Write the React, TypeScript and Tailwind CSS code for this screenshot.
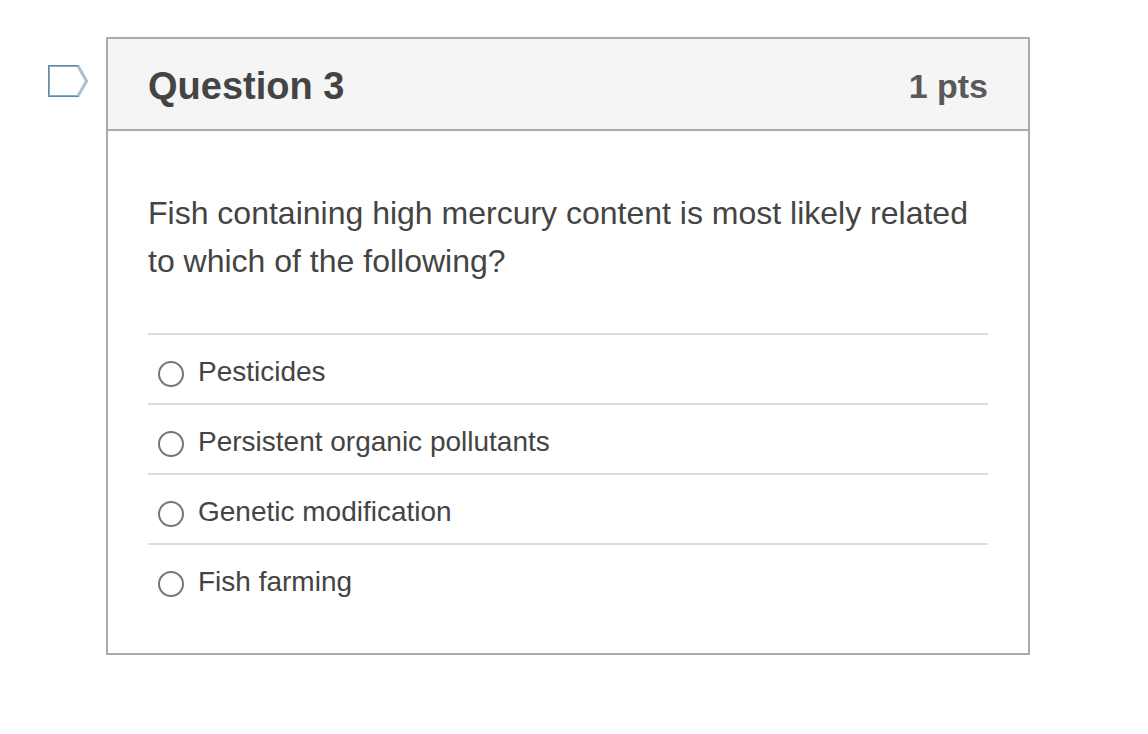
import { useState } from "react";

const answers = [
  "Pesticides",
  "Persistent organic pollutants",
  "Genetic modification",
  "Fish farming",
];

function FlagButton() {
  const [flagged, setFlagged] = useState(false);
  return (
    <button
      type="button"
      aria-label="Flag this question"
      aria-pressed={flagged}
      onClick={() => setFlagged(!flagged)}
      className="mt-7 mr-[18px] shrink-0"
    >
      <svg width="40" height="32" viewBox="0 0 40 32" className="block">
        <path
          d="M1 1H30L38.5 16L30 31H1Z"
          fill={flagged ? "#fcd34d" : "#ffffff"}
          stroke="#8dabc1"
          strokeWidth="2"
        />
        <path
          d="M30 1L38.5 16L30 31"
          fill="none"
          stroke="#a9c1d3"
          strokeWidth="3"
        />
        <path
          d="M30.5 31.5H0.5V0.5H30.5"
          fill="none"
          stroke="#6289a6"
          strokeWidth="1"
        />
      </svg>
    </button>
  );
}

export default function App() {
  const [selected, setSelected] = useState<string | null>(null);

  return (
    <main className="flex items-start bg-white pt-[37px] pr-[118px] pb-20 pl-12 font-['Liberation_Sans',Arial,sans-serif] text-[#444444]">
      <FlagButton />
      <section className="min-w-0 grow border-2 border-[#aaaaaa]">
        <header className="flex items-center justify-between border-b-2 border-[#aaaaaa] bg-[#f5f5f5] px-10 pt-[22px] pb-[18px]">
          <h1 className="text-[38px] leading-[50px] font-bold">Question 3</h1>
          <span className="text-[34px] leading-[50px] font-bold text-[#595959]">1 pts</span>
        </header>
        <div className="px-10 pt-[58px] pb-10">
          <p id="question" className="text-[32px] leading-[48px]">
            Fish containing high mercury content is most likely related to which of the following?
          </p>
          <div role="radiogroup" aria-labelledby="question" className="mt-12">
            {answers.map((answer) => (
              <label
                key={answer}
                className="flex h-[70px] items-center border-t-2 border-[#dddddd] pt-[6px] pl-[10px]"
              >
                <input
                  type="radio"
                  name="answer"
                  value={answer}
                  checked={selected === answer}
                  onChange={() => setSelected(answer)}
                  className="mt-1 mr-[14px] size-[26px] shrink-0 appearance-none rounded-full border-2 border-[#767676] bg-white checked:border-8 checked:border-[#0075ff]"
                />
                <span className="text-[28px] leading-8">{answer}</span>
              </label>
            ))}
          </div>
        </div>
      </section>
    </main>
  );
}
